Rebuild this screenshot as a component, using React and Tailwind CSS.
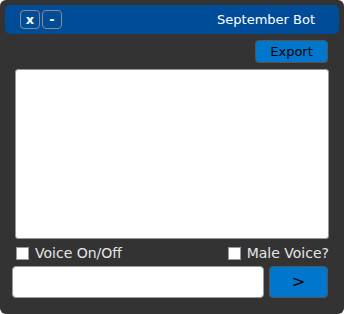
import React from 'react';

const font = { fontFamily: '"DejaVu Sans", Verdana, sans-serif' };

export default function App() {
  return (
    <div className="w-[344px] h-[314px] bg-[#333333] rounded-[6px] p-[5px] text-[13px]" style={font}>
      {/* Title bar */}
      <div className="h-[29px] bg-[#004c99] rounded-[5px] flex items-center justify-between pl-[15px] pr-[16px]">
        <div className="flex gap-[2px]">
          <button className="w-[20px] h-[19px] rounded-[4px] border border-[#8a8a8a] text-white font-bold text-[13px] leading-none flex items-center justify-center">
            x
          </button>
          <button className="w-[20px] h-[19px] rounded-[4px] border border-[#8a8a8a] text-white font-bold text-[13px] leading-none flex items-center justify-center">
            -
          </button>
        </div>
        <span className="text-white text-[13px] mr-[8px]">September Bot</span>
      </div>

      {/* Export */}
      <div className="flex justify-end pr-[11px] mt-[6px]">
        <button className="w-[73px] h-[23px] rounded-[4px] bg-[#0077cc] border border-[#555555] text-black text-[13px] leading-none">
          Export
        </button>
      </div>

      {/* Chat log */}
      <div className="ml-[10px] mr-[10px] mt-[6px] h-[170px] bg-white rounded-[3px] border border-[#999999]"></div>

      {/* Options */}
      <div className="flex items-center justify-between mt-[6px] pl-[11px] pr-[10px] h-[16px] text-[14px]">
        <label className="flex items-center gap-[6px] text-[#e6e6e6]">
          <span className="w-[13px] h-[13px] bg-white border border-[#999]"></span>
          Voice On/Off
        </label>
        <label className="flex items-center gap-[6px] text-[#e6e6e6]">
          <span className="w-[13px] h-[13px] bg-white border border-[#999]"></span>
          Male Voice?
        </label>
      </div>

      {/* Input */}
      <div className="flex mt-[5px] pl-[7px] pr-[11px] gap-[5px]">
        <div className="w-[252px] h-[32px] bg-white rounded-[4px] border border-[#999999]"></div>
        <button className="flex-1 h-[32px] rounded-[4px] bg-[#0077cc] border border-[#555555] text-black text-[16px] leading-none">
          &gt;
        </button>
      </div>
    </div>
  );
}
